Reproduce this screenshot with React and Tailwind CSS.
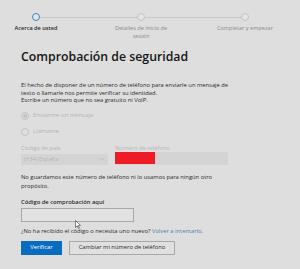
import React from "react";

const font = { fontFamily: '"Open Sans", "Noto Sans", sans-serif' };

function Step({ active }) {
  return (
    <div
      className={
        "w-[8px] h-[8px] rounded-full border-[1.5px] bg-[#e4e4e4] shrink-0 " +
        (active ? "border-[#3f86c4]" : "border-[#c4c4c4]")
      }
    />
  );
}

function Radio({ checked, label }) {
  return (
    <div className="flex items-center gap-[4px] h-[10px]">
      <div className="w-[8px] h-[8px] rounded-full border border-[#c2c2c2] flex items-center justify-center">
        {checked && <div className="w-[4px] h-[4px] rounded-full bg-[#c2c2c2]" />}
      </div>
      <span className="text-[6px] text-[#b4b4b4]">{label}</span>
    </div>
  );
}

export default function App() {
  return (
    <div className="w-[300px] h-[269px] bg-[#dedede] overflow-hidden text-[#1e1e1e]" style={font}>
      {/* stepper */}
      <div className="flex items-center pt-[13px] pl-[32px]">
        <Step active />
        <div className="w-[97px] h-px bg-[#c8c8c8]" />
        <Step />
        <div className="w-[96px] h-px bg-[#c8c8c8]" />
        <Step />
      </div>
      <div className="flex mt-[3px] text-[5.6px] leading-[8px] text-center">
        <div className="w-[72px] font-semibold text-[#2a2a2a]">Acerca de usted</div>
        <div className="w-[138px] text-[#8a8a8a]">
          Detalles de inicio de
          <br />
          sesión
        </div>
        <div className="w-[70px] text-[#8a8a8a]">Completar y empezar</div>
      </div>

      <div className="pl-[21px]">
        <h1 className="text-[12.3px] font-semibold leading-[16px] mt-[9px] text-[#151515]">
          Comprobación de seguridad
        </h1>

        <p className="text-[5.8px] leading-[7.6px] mt-[17px] text-[#2a2a2a]">
          El hecho de disponer de un número de teléfono para enviarle un mensaje de
          <br />
          texto o llamarle nos permite verificar su identidad.
          <br />
          Escribe un número que no sea gratuito ni VoIP.
        </p>

        <div className="mt-[6px] flex flex-col gap-[6px]">
          <Radio checked label="Enviarme un mensaje" />
          <Radio label="Llámame" />
        </div>

        <div className="flex gap-[7px] mt-[7px]">
          <div className="w-[87px]">
            <div className="text-[5.8px] leading-[8px] text-[#b4b4b4]">Código de país</div>
            <div className="mt-[2px] h-[11px] bg-[#d4d4d4] flex items-center justify-between px-[3px]">
              <span className="text-[5.8px] text-[#b4b4b4]">(+34) España</span>
              <svg width="6" height="4" viewBox="0 0 6 4" fill="none">
                <path d="M0.5 0.8 L3 3.2 L5.5 0.8" stroke="#b8b8b8" strokeWidth="0.8" />
              </svg>
            </div>
          </div>
          <div className="w-[113px]">
            <div className="text-[5.8px] leading-[8px] text-[#b4b4b4]">Número de teléfono</div>
            <div className="h-[13px] bg-[#d4d4d4]">
              <div className="w-[40px] h-[12px] bg-[#ee1c25]" />
            </div>
          </div>
        </div>

        <p className="text-[5.8px] leading-[9px] mt-[8px] text-[#2a2a2a]">
          No guardamos este número de teléfono ni lo usamos para ningún otro
          <br />
          propósito.
        </p>

        <div className="text-[5.8px] leading-[8px] mt-[7px] font-semibold text-[#2a2a2a]">
          Código de comprobación aquí
        </div>
        <div className="relative mt-[2px] w-[113px] h-[14px] border border-[#a8a8a8] bg-[#e2e2e2]">
          <svg className="absolute left-[53px] top-[11px]" width="6" height="9" viewBox="0 0 6 9">
            <path d="M0.5 0.5 L0.5 7.5 L2.2 5.8 L3.4 8.5 L4.4 8 L3.3 5.4 L5.5 5.4 Z" fill="#fff" stroke="#333" strokeWidth="0.6" />
          </svg>
        </div>

        <div className="text-[5.8px] leading-[8px] mt-[5px] text-[#2a2a2a]">
          ¿No ha recibido el código o necesita uno nuevo?{" "}
          <span className="text-[#3d7fbd]">Volver a intentarlo.</span>
        </div>

        <div className="flex gap-[7px] mt-[6px]">
          <button className="w-[41px] h-[14px] bg-[#0a6cc0] text-white text-[5.8px] flex items-center justify-center">
            Verificar
          </button>
          <button className="w-[106px] h-[14px] border border-[#a8a8a8] bg-[#e0e0e0] text-[#2a2a2a] text-[5.8px] flex items-center justify-center">
            Cambiar mi número de teléfono
          </button>
        </div>
      </div>
    </div>
  );
}
